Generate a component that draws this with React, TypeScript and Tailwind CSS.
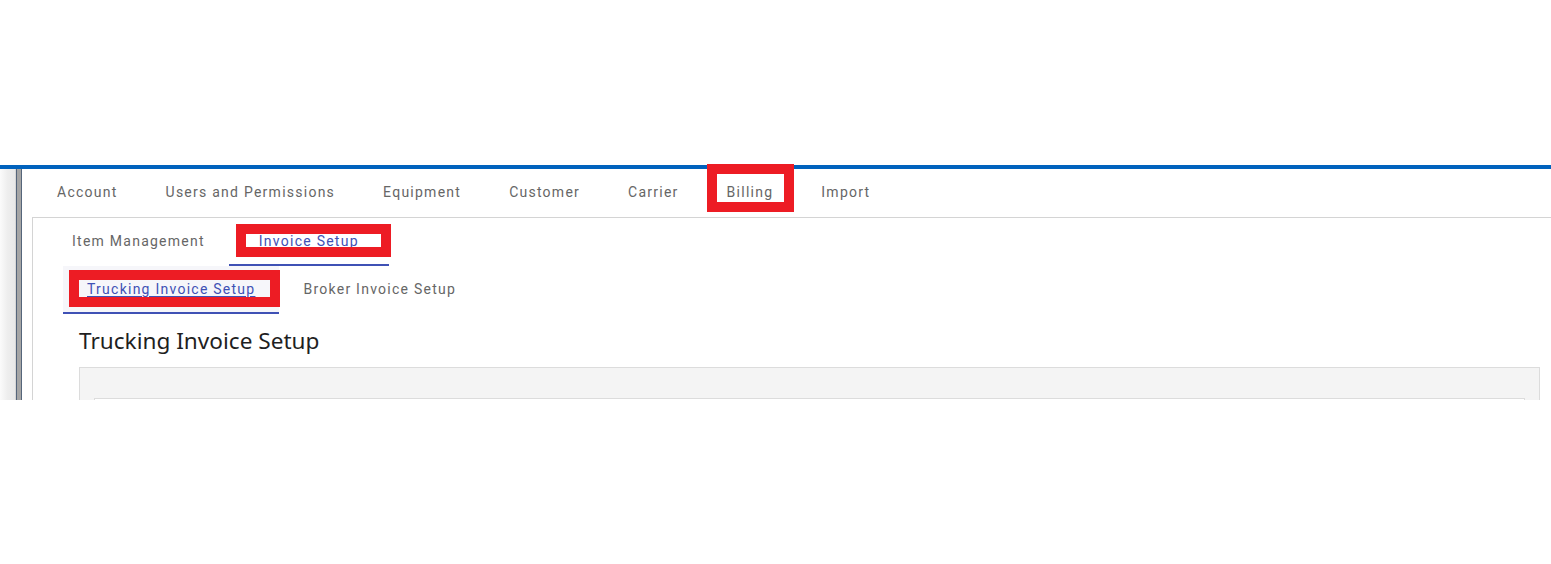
import type { ReactNode } from 'react'

const mainTabs = ['Account', 'Users and Permissions', 'Equipment', 'Customer', 'Carrier', 'Billing', 'Import']

function Marker({ className }: { className: string }) {
  return <span className={`pointer-events-none absolute z-10 border-[10px] border-[#ed1c24] ${className}`} />
}

function MainTab({ label }: { label: string }) {
  return (
    <div className="relative flex h-full items-center px-6 pb-[2px] text-[14px] tracking-[1.25px] text-[#666]">
      {label}
      {label === 'Billing' ? <Marker className="left-[4px] right-[3px] top-[-5px] h-[48px]" /> : null}
    </div>
  )
}

function SubTab({ active, children }: { active?: boolean; children: ReactNode }) {
  return (
    <div
      className={`relative flex h-full min-w-[160px] items-center justify-center px-6 pb-[2px] text-[14px] tracking-[1.25px] ${
        active ? 'text-[#3f51b5]' : 'text-[#666]'
      }`}
    >
      {children}
      {active ? <span className="absolute bottom-0 left-0 right-0 h-[2px] bg-[#3f51b5]" /> : null}
    </div>
  )
}

export default function App() {
  return (
    <div className="h-[564px] w-[1551px] bg-white" style={{ fontFamily: 'Roboto, "Liberation Sans", sans-serif' }}>
      <div className="h-[165px]" />
      <div className="h-[4px] bg-[#0062bd]" />
      <div className="flex h-[231px]">
        {/* left frame edge */}
        <div className="flex w-[32px] shrink-0">
          <div className="w-[15px] bg-gradient-to-r from-[#fbfbfb] via-[#eeeeee] to-[#e8e8e8]" />
          <div className="w-px bg-[#d6d6d6]" />
          <div className="w-px bg-[#55657a]" />
          <div className="w-[4px] bg-[#a5a5a5]" />
          <div className="w-px bg-[#55657a]" />
          <div className="flex-1 bg-white" />
        </div>

        <div className="flex min-w-0 flex-1 flex-col">
          <nav className="flex h-[48px] shrink-0 pl-px">
            {mainTabs.map((tab) => (
              <MainTab key={tab} label={tab} />
            ))}
          </nav>

          <section className="flex-1 overflow-hidden border-l border-t border-[#d4d4d4]">
            <div className="flex h-[48px] pl-[15px]">
              <SubTab>Item Management</SubTab>
              <SubTab active>
                Invoice Setup
                <Marker className="left-[7px] right-[-2px] top-[6px] bottom-[9px]" />
              </SubTab>
            </div>

            <div className="pl-[30px]">
              <div className="flex h-[48px]">
                <div className="relative flex h-full items-center bg-[#f6f6fa] px-6 pb-[2px] text-[14px] tracking-[1.25px] text-[#3f51b5]">
                  <span className="underline underline-offset-2">Trucking Invoice Setup</span>
                  <span className="absolute bottom-0 left-0 right-0 h-[2px] bg-[#3f51b5]" />
                  <Marker className="left-[6px] right-[-1px] top-[4px] bottom-[7px]" />
                </div>
                <div className="flex h-full items-center px-6 pb-[2px] text-[14px] tracking-[1.25px] text-[#666]">
                  Broker Invoice Setup
                </div>
              </div>

              <div className="pl-[16px] pr-[11px]">
                <h1
                  className="flex h-[53px] items-center text-[22.6px] text-[#1f1f1f]"
                  style={{ fontFamily: '"Noto Sans", "Open Sans", sans-serif' }}
                >
                  Trucking Invoice Setup
                </h1>
                <div className="h-[200px] border border-[#dcdcdc] bg-[#f4f4f4] px-[14px] pt-[30px]">
                  <div className="h-[150px] border border-[#dcdcdc] bg-white" />
                </div>
              </div>
            </div>
          </section>
        </div>
      </div>
    </div>
  )
}
